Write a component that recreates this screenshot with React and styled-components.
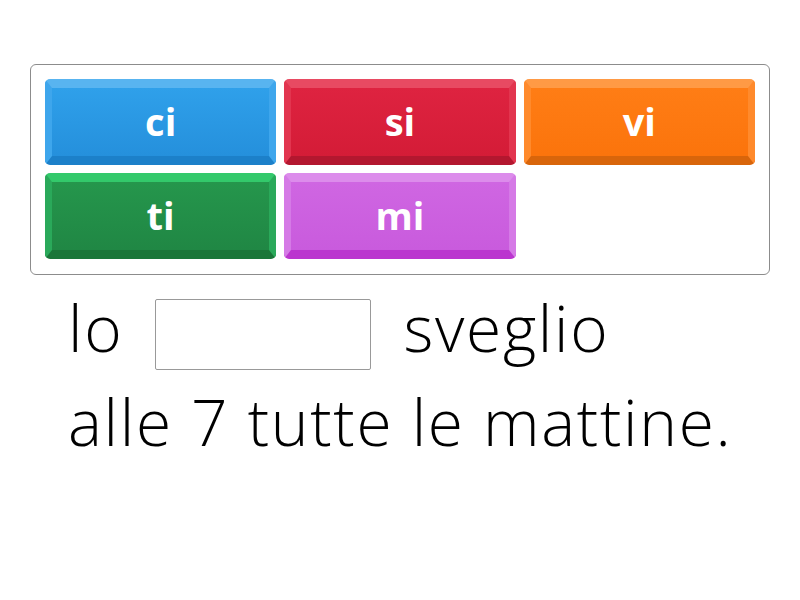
import React from "react";
import styled, { createGlobalStyle } from "styled-components";

const Global = createGlobalStyle`
  html, body { margin: 0; padding: 0; background: #ffffff; }
  body { font-family: "Open Sans", "Noto Sans", sans-serif; }
`;

const Page = styled.div`
  width: 800px;
  height: 600px;
  padding-top: 64px;
  box-sizing: border-box;
`;

const Bank = styled.div`
  margin-left: 30px;
  width: 740px;
  height: 211px;
  box-sizing: border-box;
  border: 1px solid #8c8c8c;
  border-radius: 6px;
  padding: 14px;
  display: grid;
  grid-template-columns: repeat(3, 1fr);
  grid-template-rows: 86px 86px;
  column-gap: 8px;
  row-gap: 8px;
`;

const Tile = styled.div`
  box-sizing: border-box;
  border-radius: 5px;
  border-style: solid;
  border-width: 9px 7px 9px 7px;
  border-top-color: ${(p) => p.$top};
  border-left-color: ${(p) => p.$side};
  border-right-color: ${(p) => p.$side};
  border-bottom-color: ${(p) => p.$bottom};
  background: linear-gradient(to bottom, ${(p) => p.$faceTop}, ${(p) => p.$faceBottom});
  display: flex;
  align-items: center;
  justify-content: center;
  padding-bottom: 3px;
  color: #ffffff;
  font-family: "Open Sans", sans-serif;
  font-weight: 700;
  font-size: 38px;
  line-height: 1;
`;

const Sentence = styled.div`
  margin-top: 11px;
  padding-left: 68px;
  width: 800px;
  box-sizing: border-box;
  display: flex;
  flex-wrap: wrap;
  align-items: flex-start;
  row-gap: 10px;
  font-family: "Open Sans", sans-serif;
  font-weight: 300;
  font-size: 64px;
  letter-spacing: 1.7px;
  line-height: 84px;
  color: #000000;
`;

const Word = styled.span`
  white-space: nowrap;
  margin-right: ${(p) => p.$gap || 0}px;
`;

const Blank = styled.div`
  margin-top: 13px;
  margin-right: 32px;
  width: 216px;
  height: 71px;
  box-sizing: border-box;
  border: 1px solid #999999;
  border-radius: 2px;
  background: #ffffff;
`;

const tiles = [
  { t: "ci", top: "#58b4f0", side: "#3ea6ec", bottom: "#1c80c9", faceTop: "#2fa0ea", faceBottom: "#2590dc" },
  { t: "si", top: "#e84a62", side: "#e2354f", bottom: "#b3172f", faceTop: "#de2340", faceBottom: "#d41c37" },
  { t: "vi", top: "#ff9a45", side: "#ff8a2c", bottom: "#d8650b", faceTop: "#ff7d15", faceBottom: "#fb740c" },
  { t: "ti", top: "#33c96b", side: "#2aa95a", bottom: "#1b7639", faceTop: "#25964c", faceBottom: "#208744" },
  { t: "mi", top: "#dc8ceb", side: "#d57ae6", bottom: "#bb35cf", faceTop: "#cf66e2", faceBottom: "#c95bdd" },
];

export default function App() {
  return (
    <Page>
      <Global />
      <Bank>
        {tiles.map((x) => (
          <Tile
            key={x.t}
            $top={x.top}
            $side={x.side}
            $bottom={x.bottom}
            $faceTop={x.faceTop}
            $faceBottom={x.faceBottom}
          >
            {x.t}
          </Tile>
        ))}
      </Bank>
      <Sentence>
        <Word $gap={32}>lo</Word>
        <Blank />
        <Word>sveglio</Word>
        <Word>alle 7 tutte le mattine.</Word>
      </Sentence>
    </Page>
  );
}
